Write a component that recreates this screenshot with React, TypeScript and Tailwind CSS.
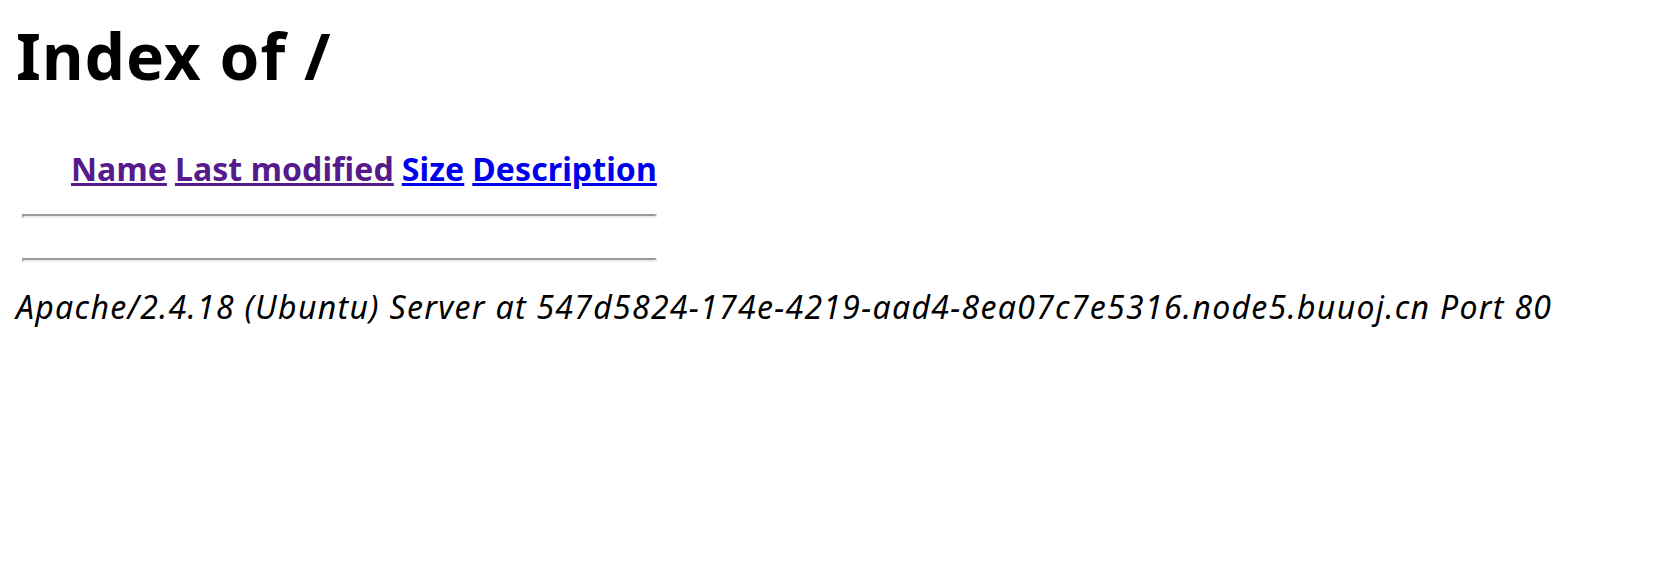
export default function App() {
  return (
    <div className="min-h-screen bg-white text-black font-['Noto_Sans','Noto_Sans_CJK_SC',sans-serif]">
      <div className="pl-4">
        <h1 className="pt-[24px] text-[64px] font-bold leading-[64px] tracking-[1px]">Index of /</h1>
        <table className="mt-[54px] border-separate border-spacing-1">
          <tbody>
            <tr className="text-[32px] font-bold leading-[42px] tracking-[0.1px]">
              <th className="p-[2px] align-top">
                <span className="block w-[41px]" />
              </th>
              <th className="p-[2px]">
                <a href="#" className="text-[#551a8b] underline">Name</a>
              </th>
              <th className="p-[2px]">
                <a href="#" className="text-[#551a8b] underline">Last modified</a>
              </th>
              <th className="p-[2px]">
                <a href="#" className="text-[#0000ee] underline">Size</a>
              </th>
              <th className="p-[2px]">
                <a href="#" className="text-[#0000ee] underline">Description</a>
              </th>
            </tr>
            <tr>
              <th colSpan={5} className="p-[2px]">
                <hr className="my-4 border-2 border-t-[#9a9a9a] border-l-[#9a9a9a] border-b-[#eeeeee] border-r-[#eeeeee]" />
              </th>
            </tr>
            <tr>
              <th colSpan={5} className="p-[2px]">
                <hr className="my-4 border-2 border-t-[#9a9a9a] border-l-[#9a9a9a] border-b-[#eeeeee] border-r-[#eeeeee]" />
              </th>
            </tr>
          </tbody>
        </table>
        <address className="mt-[2px] text-[32px] italic leading-[42px] tracking-[1.3px]">
          Apache/2.4.18 (Ubuntu) Server at 547d5824-174e-4219-aad4-8ea07c7e5316.node5.buuoj.cn Port 80
        </address>
      </div>
    </div>
  )
}
